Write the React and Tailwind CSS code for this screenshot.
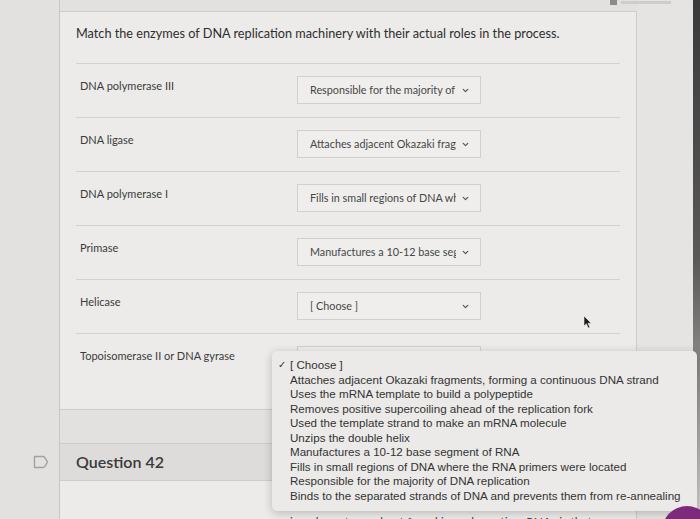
import React from "react";
import { ChevronDown } from "lucide-react";

const rows = [
  { label: "DNA polymerase III", value: "Responsible for the majority of DNA replication" },
  { label: "DNA ligase", value: "Attaches adjacent Okazaki fragments, forming a continuous DNA strand" },
  { label: "DNA polymerase I", value: "Fills in small regions of DNA where the RNA primers were located" },
  { label: "Primase", value: "Manufactures a 10-12 base segment of RNA" },
  { label: "Helicase", value: "[ Choose ]" },
  { label: "Topoisomerase II or DNA gyrase", value: "[ Choose ]" },
];

const options = [
  "Attaches adjacent Okazaki fragments, forming a continuous DNA strand",
  "Uses the mRNA template to build a polypeptide",
  "Removes positive supercoiling ahead of the replication fork",
  "Used the template strand to make an mRNA molecule",
  "Unzips the double helix",
  "Manufactures a 10-12 base segment of RNA",
  "Fills in small regions of DNA where the RNA primers were located",
  "Responsible for the majority of DNA replication",
  "Binds to the separated strands of DNA and prevents them from re-annealing",
];

function Select({ value }) {
  return (
    <div className="mt-[12px] flex h-[28px] w-[184px] items-center border border-[#d2d0ce] bg-[#efeeec] pl-[12px] pr-[10px]">
      <div className="w-[146px] overflow-hidden whitespace-nowrap text-[10.8px] text-[#464646]">{value}</div>
      <div className="flex-1" />
      <ChevronDown size={9} strokeWidth={3.5} className="text-[#5a5a5a]" />
    </div>
  );
}

export default function App() {
  return (
    <div className="relative flex h-[519px] w-[700px] overflow-hidden bg-[#e3e1df] font-['Lato','Liberation_Sans',sans-serif]">
      {/* left gutter */}
      <div className="flex w-[60px] shrink-0 flex-col border-r border-[#c9c7c5] pt-[443px]">
        <div className="flex h-[38px] items-center pl-[33px]">
          <svg width="16" height="14" viewBox="0 0 16 14" fill="none" stroke="#a3a19f" strokeWidth="1.4">
            <path d="M1.5 1.5 H10 Q11 1.5 11.6 2.3 L14.2 6.3 Q14.6 7 14.2 7.7 L11.6 11.7 Q11 12.5 10 12.5 H1.5 Z" strokeLinejoin="round" />
          </svg>
        </div>
      </div>

      {/* main column */}
      <div className="flex w-[577px] shrink-0 flex-col pt-[11px]">
        <div className="h-[399px] shrink-0 border-t border-b border-r border-[#cfcdcb] bg-[#ecebe9] px-[16px]">
          <div className="pt-[13px] text-[12.7px] leading-[16px] text-[#2e2e2e]">
            Match the enzymes of DNA replication machinery with their actual roles in the process.
          </div>
          <div className="mt-[22px] border-b border-[#d3d1cf]" />
          {rows.map((r, i) => (
            <div
              key={r.label}
              className={
                i < rows.length - 1
                  ? "flex h-[54px] items-start border-b border-[#d3d1cf]"
                  : "flex h-[54px] items-start"
              }
            >
              <div className="w-[221px] pl-[4px] pt-[14px] text-[11px] text-[#3b3b3b]">{r.label}</div>
              <Select value={r.value} />
            </div>
          ))}
        </div>

        <div className="mt-[33px] flex h-[38px] shrink-0 items-center border border-l-0 border-[#cfcdcb] bg-[#dedcda] pl-[16px]">
          <span className="text-[16px] font-semibold text-[#3a3a3a]">Question 42</span>
        </div>
        <div className="min-h-0 flex-1 overflow-hidden whitespace-nowrap border-r border-[#cfcdcb] bg-[#ecebe9] pl-[230px] pt-[32px] text-[12px] text-[#444]">
          in eukaryotes and not found in prokaryotic mRNAs is that:
        </div>
      </div>

      {/* right gutter */}
      <div className="flex flex-1">
        <div className="flex-1 bg-[#e6e4e2]" />
        <div className="w-[7px] bg-gradient-to-b from-[#3a3a3a] via-[#5a5958] to-[#d8d6d4]" />
      </div>

      {/* top strip */}
      <div className="absolute left-[610px] top-[0px] flex items-center gap-[4px]">
        <div className="h-[5px] w-[7px] bg-[#8d8b89]" />
        <div className="h-[3px] w-[50px] bg-[#cfcdcb]" />
      </div>

      {/* cursor */}
      <svg className="absolute left-[583px] top-[315px]" width="9" height="14" viewBox="0 0 9 14">
        <path d="M1 1 L1 11 L3.4 8.8 L5.2 13 L6.8 12.3 L5 8.2 L8.2 8.2 Z" fill="#1b1b1b" stroke="#e8e8e8" strokeWidth="0.6" />
      </svg>

      {/* open dropdown list */}
      <div className="absolute left-[272px] top-[351px] w-[425px] rounded-[5px] bg-[#ebeae8] pb-[8px] pt-[7px] font-['Liberation_Sans','Arial',sans-serif] text-[11.6px] leading-[14.5px] text-[#333] shadow-[0_2px_10px_rgba(0,0,0,0.22)]">
        <div className="flex">
          <span className="w-[18px] pl-[6px] text-[10px]">✓</span>
          <span>[ Choose ]</span>
        </div>
        {options.map((o) => (
          <div key={o} className="whitespace-nowrap pl-[18px]">
            {o}
          </div>
        ))}
      </div>

      {/* purple bubble */}
      <div className="absolute left-[662px] top-[506px] h-[50px] w-[50px] rounded-full bg-[#7d2a7c]" />
    </div>
  );
}
